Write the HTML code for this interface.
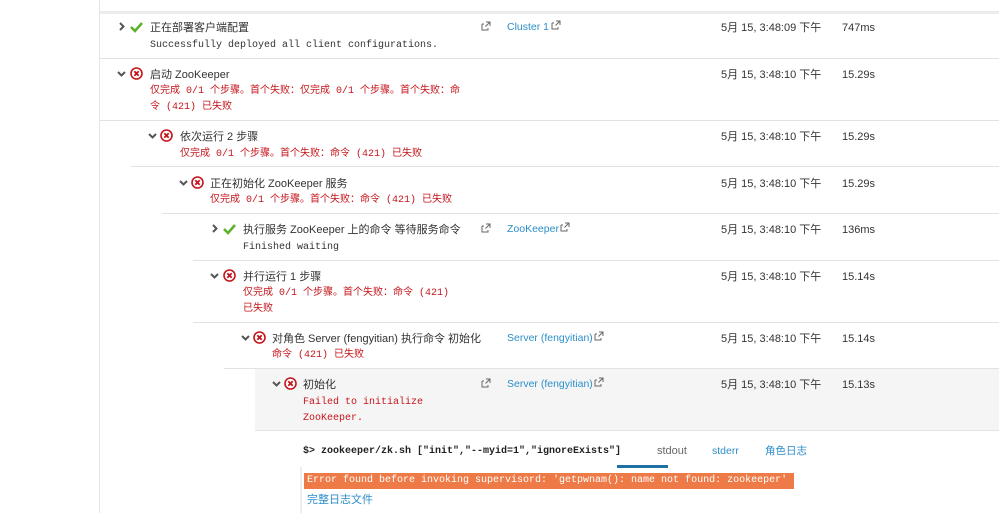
<!DOCTYPE html>
<html><head><meta charset="utf-8"><style>
*{margin:0;padding:0;box-sizing:border-box}
body{width:999px;height:513px;overflow:hidden;background:#fff;position:relative;font-family:"Liberation Sans","Noto Sans CJK SC",sans-serif;font-size:11px;color:#333}
.a{position:absolute;white-space:nowrap;line-height:14px;transform:translateY(2px)}
.m{font-family:"Liberation Mono","Noto Sans CJK SC",monospace;font-size:10px}
.r{color:#c4161c}
.l{color:#2d8ec9;font-size:10.5px}
.hl{position:absolute;height:1px;background:#e2e2e2;right:0}
svg{position:absolute}
</style></head><body>
<div style="position:absolute;left:99px;top:0;width:1px;height:513px;background:#e4e4e4"></div>
<div class="a m" style="left:150px;top:-11px;color:#999">已成功完成 1 个步骤。</div>
<div class="hl" style="left:100px;top:11px;height:3px;background:#ececec"></div>
<div class="hl" style="left:100px;top:58px"></div>
<div class="hl" style="left:100px;top:120px"></div>
<div class="hl" style="left:131px;top:166px"></div>
<div class="hl" style="left:162px;top:213px"></div>
<div class="hl" style="left:193px;top:260px"></div>
<div class="hl" style="left:193px;top:322px"></div>
<div class="hl" style="left:224px;top:368px"></div>
<div style="position:absolute;left:255px;top:369px;right:0;height:62px;background:#f5f5f5;border-bottom:1px solid #e2e2e2"></div>

<svg width="0" height="0"><defs>
<g id="x"><circle cx="6.5" cy="6.5" r="5.5" fill="#fff" stroke="#c4161c" stroke-width="1.6"/><path d="M4.3 4.3L8.7 8.7M8.7 4.3L4.3 8.7" stroke="#c4161c" stroke-width="1.8"/></g>
<g id="ck"><path d="M1 7L5 11L12 3" fill="none" stroke="#5cb22a" stroke-width="2.6"/></g>
<g id="cd"><path d="M1 2L4.5 5.5L8 2" fill="none" stroke="#555" stroke-width="2"/></g>
<g id="cr"><path d="M2 1L5.5 4.5L2 8" fill="none" stroke="#555" stroke-width="2"/></g>
<g id="ex"><path d="M1 3H3M1 3V9H7V7M5 1H9V5M9 1L4.5 5.5" fill="none" stroke="#666" stroke-width="1"/></g>
</defs></svg>

<!-- Row A -->
<svg style="left:118px;top:22px" width="10" height="10"><use href="#cr"/></svg>
<svg style="left:130px;top:20px" width="14" height="14"><use href="#ck"/></svg>
<div class="a" style="left:150px;top:19px">正在部署客户端配置</div>
<div class="a m" style="left:150px;top:37px">Successfully deployed all client configurations.</div>
<svg style="left:481px;top:21px" width="10" height="10"><use href="#ex"/></svg>
<div class="a l" style="left:507px;top:18px">Cluster 1</div>
<svg style="left:551px;top:20px" width="10" height="10"><use href="#ex"/></svg>
<div class="a" style="left:721px;top:19px">5月 15, 3:48:09 下午</div>
<div class="a" style="left:842px;top:19px">747ms</div>

<!-- Row B -->
<svg style="left:117px;top:70px" width="10" height="10"><use href="#cd"/></svg>
<svg style="left:130px;top:67px" width="13" height="13"><use href="#x"/></svg>
<div class="a" style="left:150px;top:66px">启动 ZooKeeper</div>
<div class="a m r" style="left:150px;top:83px">仅完成 0/1 个步骤。首个失败：仅完成 0/1 个步骤。首个失败：命</div>
<div class="a m r" style="left:150px;top:99px">令 (421) 已失败</div>
<div class="a" style="left:721px;top:66px">5月 15, 3:48:10 下午</div>
<div class="a" style="left:842px;top:66px">15.29s</div>

<!-- Row C -->
<svg style="left:148px;top:132px" width="10" height="10"><use href="#cd"/></svg>
<svg style="left:160px;top:129px" width="13" height="13"><use href="#x"/></svg>
<div class="a" style="left:180px;top:128px">依次运行 2 步骤</div>
<div class="a m r" style="left:180px;top:146px">仅完成 0/1 个步骤。首个失败：命令 (421) 已失败</div>
<div class="a" style="left:721px;top:128px">5月 15, 3:48:10 下午</div>
<div class="a" style="left:842px;top:128px">15.29s</div>

<!-- Row D -->
<svg style="left:179px;top:179px" width="10" height="10"><use href="#cd"/></svg>
<svg style="left:191px;top:176px" width="13" height="13"><use href="#x"/></svg>
<div class="a" style="left:210px;top:175px">正在初始化 ZooKeeper 服务</div>
<div class="a m r" style="left:210px;top:192px">仅完成 0/1 个步骤。首个失败：命令 (421) 已失败</div>
<div class="a" style="left:721px;top:175px">5月 15, 3:48:10 下午</div>
<div class="a" style="left:842px;top:175px">15.29s</div>

<!-- Row E -->
<svg style="left:211px;top:224px" width="10" height="10"><use href="#cr"/></svg>
<svg style="left:223px;top:222px" width="14" height="14"><use href="#ck"/></svg>
<div class="a" style="left:243px;top:221px">执行服务 ZooKeeper 上的命令 等待服务命令</div>
<div class="a m" style="left:243px;top:239px">Finished waiting</div>
<svg style="left:481px;top:223px" width="10" height="10"><use href="#ex"/></svg>
<div class="a l" style="left:507px;top:220px">ZooKeeper</div>
<svg style="left:560px;top:222px" width="10" height="10"><use href="#ex"/></svg>
<div class="a" style="left:721px;top:221px">5月 15, 3:48:10 下午</div>
<div class="a" style="left:842px;top:221px">136ms</div>

<!-- Row F -->
<svg style="left:210px;top:272px" width="10" height="10"><use href="#cd"/></svg>
<svg style="left:223px;top:269px" width="13" height="13"><use href="#x"/></svg>
<div class="a" style="left:243px;top:268px">并行运行 1 步骤</div>
<div class="a m r" style="left:243px;top:285px">仅完成 0/1 个步骤。首个失败：命令 (421)</div>
<div class="a m r" style="left:243px;top:301px">已失败</div>
<div class="a" style="left:721px;top:268px">5月 15, 3:48:10 下午</div>
<div class="a" style="left:842px;top:268px">15.14s</div>

<!-- Row G -->
<svg style="left:241px;top:334px" width="10" height="10"><use href="#cd"/></svg>
<svg style="left:253px;top:331px" width="13" height="13"><use href="#x"/></svg>
<div class="a" style="left:272px;top:330px">对角色 Server (fengyitian) 执行命令 初始化</div>
<div class="a m r" style="left:272px;top:347px">命令 (421) 已失败</div>
<div class="a l" style="left:507px;top:329px">Server (fengyitian)</div>
<svg style="left:594px;top:331px" width="10" height="10"><use href="#ex"/></svg>
<div class="a" style="left:721px;top:330px">5月 15, 3:48:10 下午</div>
<div class="a" style="left:842px;top:330px">15.14s</div>

<!-- Row H -->
<svg style="left:272px;top:380px" width="10" height="10"><use href="#cd"/></svg>
<svg style="left:284px;top:377px" width="13" height="13"><use href="#x"/></svg>
<div class="a" style="left:303px;top:376px">初始化</div>
<div class="a m r" style="left:303px;top:394px">Failed to initialize</div>
<div class="a m r" style="left:303px;top:410px">ZooKeeper.</div>
<svg style="left:481px;top:378px" width="10" height="10"><use href="#ex"/></svg>
<div class="a l" style="left:507px;top:375px">Server (fengyitian)</div>
<svg style="left:594px;top:377px" width="10" height="10"><use href="#ex"/></svg>
<div class="a" style="left:721px;top:376px">5月 15, 3:48:10 下午</div>
<div class="a" style="left:842px;top:376px">15.13s</div>

<!-- command -->
<div class="a m" style="left:303px;top:443px;font-weight:bold;color:#222;font-size:10px">$&gt; zookeeper/zk.sh ["init","--myid=1","ignoreExists"]</div>
<div class="a" style="left:657px;top:442px;color:#666">stdout</div>
<div class="a l" style="left:712px;top:442px">stderr</div>
<div class="a l" style="left:765px;top:442px">角色日志</div>
<div style="position:absolute;left:617px;top:465px;width:51px;height:3px;background:#1f70a4"></div>
<div style="position:absolute;left:300px;top:467px;width:2px;height:46px;background:#eee"></div>
<div class="a m" style="left:304px;top:471px;width:490px;height:16px;line-height:16px;background:#ee7a47;color:#fff;padding-left:3px">Error found before invoking supervisord: 'getpwnam(): name not found: zookeeper'</div>
<div class="a l" style="left:307px;top:491px;font-size:11px">完整日志文件</div>
</body></html>
